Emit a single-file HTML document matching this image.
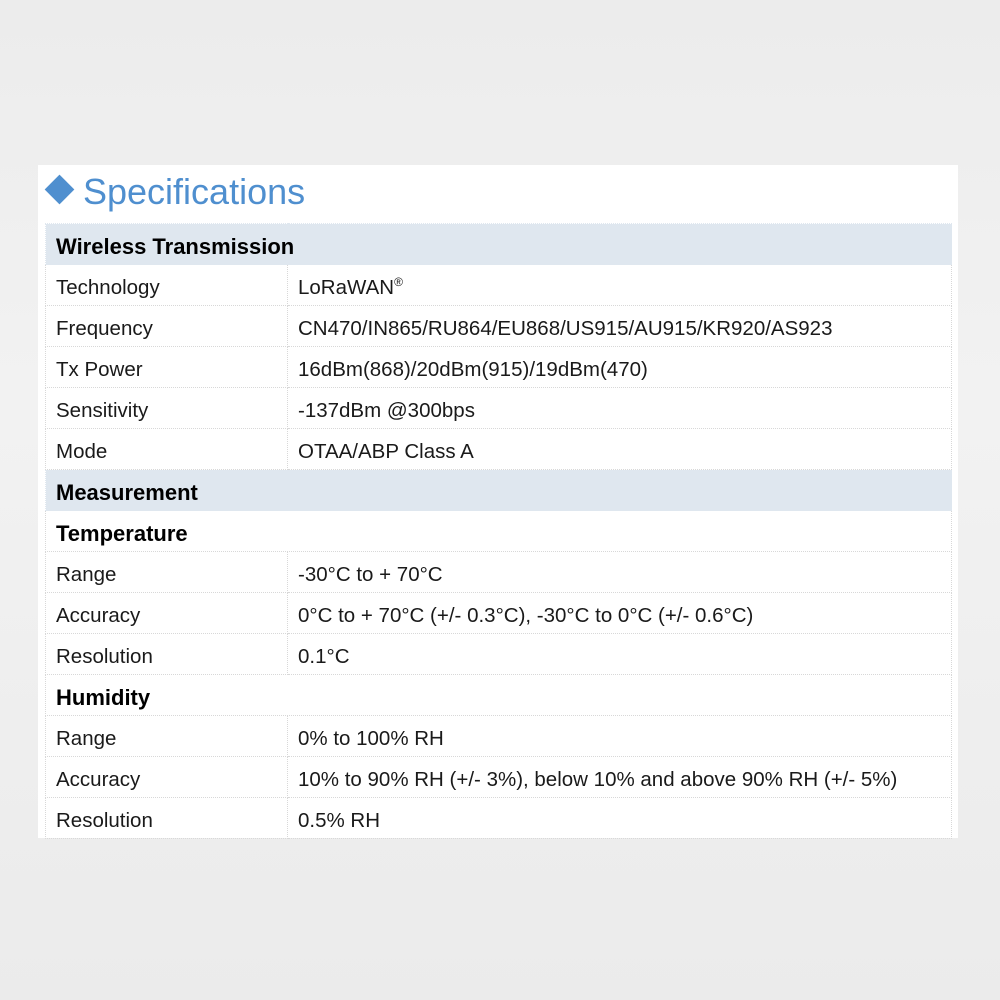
<!DOCTYPE html>
<html><head><style>
body{margin:0;width:1000px;height:1000px;background:linear-gradient(#ececec,#f2f2f2 40%,#ebebeb);font-family:"Liberation Sans",sans-serif;position:relative;overflow:hidden}
.panel{position:absolute;left:38px;top:165px;width:920px;height:673px;background:#fff}
h1{position:absolute;left:43px;top:172px;margin:0;font-weight:normal;font-size:36px;color:#4f8fcf;line-height:40px}
h1 span{display:inline-block;width:21px;height:21px;background:#4f8fcf;transform:rotate(45deg);margin:0 13px 0 6px;vertical-align:4px}
table{position:absolute;left:45px;top:223px;width:907px;border-collapse:collapse;font-size:20.5px;color:#1a1a1a}
td{height:40px;padding:5px 0 0 10px;border:1px dotted #d8d8d8;line-height:35px;white-space:nowrap;box-sizing:border-box}
td:first-child{width:242px}
tr.h td{background:#dfe7ef;font-weight:bold;color:#000;border-color:#dfe7ef;font-size:22px;letter-spacing:0}
tr.s td{font-weight:bold;color:#000;font-size:22px}
sup{font-size:12px;line-height:0}
</style></head><body>
<div class="panel"></div>
<h1><span></span>Specifications</h1>
<table>
<tr class="h"><td colspan="2">Wireless Transmission</td></tr>
<tr><td>Technology</td><td>LoRaWAN<sup>®</sup></td></tr>
<tr><td>Frequency</td><td>CN470/IN865/RU864/EU868/US915/AU915/KR920/AS923</td></tr>
<tr><td>Tx Power</td><td>16dBm(868)/20dBm(915)/19dBm(470)</td></tr>
<tr><td>Sensitivity</td><td>-137dBm @300bps</td></tr>
<tr><td>Mode</td><td>OTAA/ABP Class A</td></tr>
<tr class="h"><td colspan="2">Measurement</td></tr>
<tr class="s"><td colspan="2">Temperature</td></tr>
<tr><td>Range</td><td>-30°C to + 70°C</td></tr>
<tr><td>Accuracy</td><td>0°C to + 70°C (+/- 0.3°C), -30°C to 0°C (+/- 0.6°C)</td></tr>
<tr><td>Resolution</td><td>0.1°C</td></tr>
<tr class="s"><td colspan="2">Humidity</td></tr>
<tr><td>Range</td><td>0% to 100% RH</td></tr>
<tr><td>Accuracy</td><td>10% to 90% RH (+/- 3%), below 10% and above 90% RH (+/- 5%)</td></tr>
<tr><td>Resolution</td><td>0.5% RH</td></tr>
</table>
</body></html>
